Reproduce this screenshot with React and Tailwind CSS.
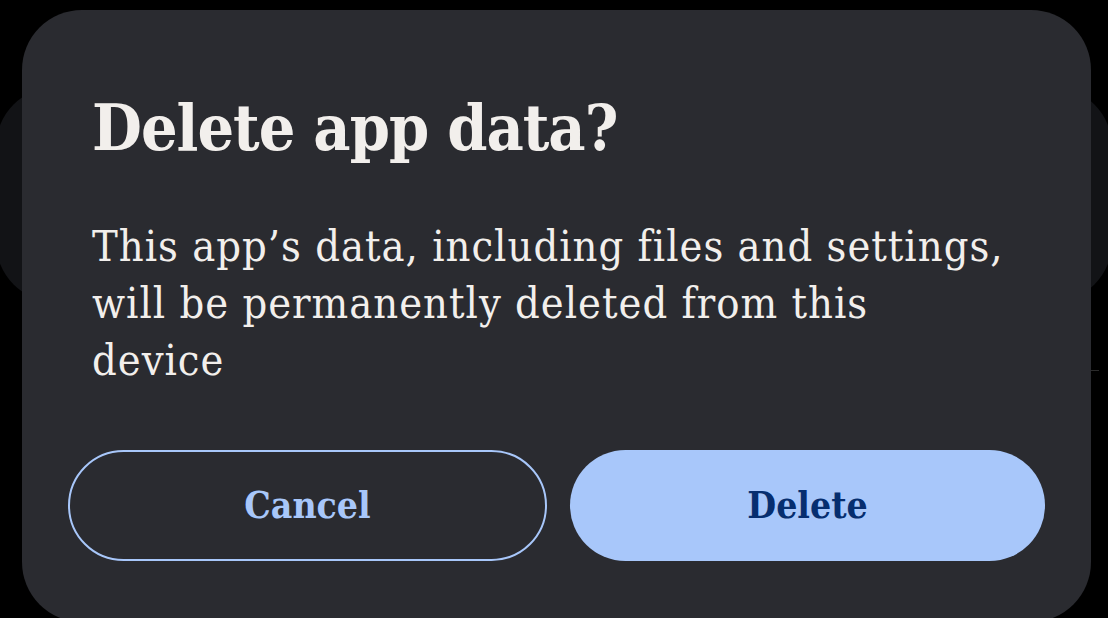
const slab = "font-['DejaVu_Serif_Condensed','DejaVu_Serif',serif]";

const Backdrop = () => {
  return (
    <div className="pt-[87px]">
      <div className="mx-[-4px] h-[215px] rounded-[60px] bg-[#121316]"></div>
      <div className="mt-[68px] ml-[60px] mr-[9px] h-px bg-[#2b2b2b]"></div>
    </div>
  );
};

export default function App() {
  return (
    <div className="relative w-[1108px] h-[618px] overflow-hidden bg-black">
      <Backdrop />

      {/* dialog */}
      <div
        className={`absolute left-[22px] top-[10px] w-[1069px] h-[612px] rounded-[60px] bg-[#2a2b30] px-[46px] pt-[78px] ${slab}`}
      >
        <h1 className="pl-[24px] text-[64px] leading-[80px] tracking-[-1px] font-bold text-[#f2efec]">
          Delete app data?
        </h1>
        <p className="mt-[50px] pl-[24px] text-[43px] leading-[57px] tracking-[1px] text-[#f2efec]">
          This app’s data, including files and settings,
          <br />
          will be permanently deleted from this
          <br />
          device
        </p>
        <div className="mt-[61px] flex gap-[23px]">
          <button className="flex-1 h-[111px] rounded-full border-2 border-[#a8c7fa] text-[37px] font-bold text-[#a8c7fa]">
            Cancel
          </button>
          <button className="flex-1 h-[111px] rounded-full bg-[#a8c7fa] text-[37px] font-bold text-[#062e6f]">
            Delete
          </button>
        </div>
      </div>
    </div>
  );
}
